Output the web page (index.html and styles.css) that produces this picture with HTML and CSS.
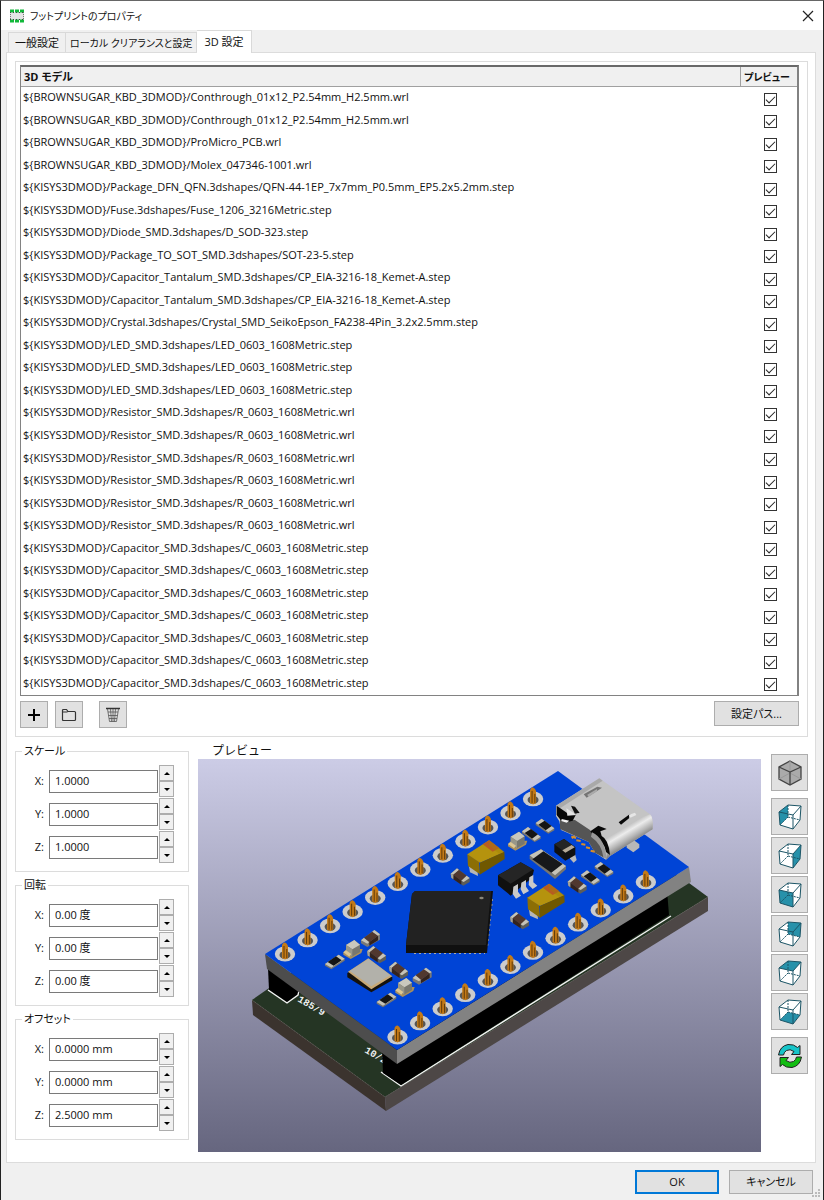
FILE: index.html
```
<!DOCTYPE html>
<html lang="ja">

<head>
    <meta charset="UTF-8">
    <meta name="viewport" content="width=device-width, initial-scale=1.0">
    <title>フットプリントのプロパティ</title>
    <link rel="stylesheet" href="styles.css">
</head>

<body>
    <div class="dialog">
        <header class="titlebar">
            <svg class="app-icon" width="16" height="16" viewBox="0 0 16 16">
                <rect x="1" y="4" width="14" height="8" fill="#e4e4e4" />
                <path d="M1.500 4v8M14.500 4v8" stroke="#777" stroke-dasharray="1 1" />
                <path d="M1 3h4M6 3h4M11 3h4M1 13h4M6 13h4M11 13h4" stroke="#12b83a" stroke-width="3" />
                <path d="M1 4.500h14M1 11.500h14" stroke="#444" stroke-dasharray="1 2" />
            </svg>
            <h1>フットプリントのプロパティ</h1>
            <button class="close" aria-label="閉じる">
                <svg width="12" height="12" viewBox="0 0 12 12">
                    <path d="M1 1l10 10M11 1L1 11" stroke="#222" stroke-width="1.2" />
                </svg>
            </button>
        </header>

        <nav class="tabs">
            <button class="tab">一般設定</button>
            <button class="tab long">ローカル クリアランスと設定</button>
            <button class="tab active">3D 設定</button>
        </nav>

        <main class="page">
            <section class="models">
                <table class="model-table">
                    <thead>
                        <tr>
                            <th>3D モデル</th>
                            <th class="col-preview">プレビュー</th>
                        </tr>
                    </thead>
                    <tbody id="modelRows"></tbody>
                </table>
                <div class="toolbar">
                    <button class="tool" aria-label="追加">
                        <svg width="14" height="14" viewBox="0 0 14 14">
                            <path d="M7 1v12M1 7h12" stroke="#000" stroke-width="2" />
                        </svg>
                    </button>
                    <button class="tool" aria-label="フォルダー">
                        <svg width="16" height="14" viewBox="0 0 16 14">
                            <path d="M1.500 11.500V2.500q0-1 1-1h3l1.500 2h6.500q1 0 1 1v7q0 1-1 1h-11q-1 0-1-1zM1.500 4h5" fill="none" stroke="#333" stroke-width="1.200" />
                        </svg>
                    </button>
                    <button class="tool trash" aria-label="削除">
                        <svg width="14" height="16" viewBox="0 0 14 16">
                            <path d="M0 1.500h14" stroke="#333" stroke-width="1.500" />
                            <path d="M1.500 2l2 12.500h7L12.500 2M4.500 2l1 12.500M7 2v12.500M9.500 2l-1 12.500M2 5h10M2.500 8.500h9M3 11.500h8" fill="none" stroke="#555" stroke-width="0.800" />
                        </svg>
                    </button>
                    <button class="paths">設定パス...</button>
                </div>
            </section>

            <section class="lower">
                <div class="params">
                    <fieldset>
                        <legend>スケール</legend>
                        <div class="param"><label for="scaleX">X:</label><input type="text" id="scaleX" value="1.0000"><span class="spin"><button aria-label="増"></button><button aria-label="減"></button></span></div>
                        <div class="param"><label for="scaleY">Y:</label><input type="text" id="scaleY" value="1.0000"><span class="spin"><button aria-label="増"></button><button aria-label="減"></button></span></div>
                        <div class="param"><label for="scaleZ">Z:</label><input type="text" id="scaleZ" value="1.0000"><span class="spin"><button aria-label="増"></button><button aria-label="減"></button></span></div>
                    </fieldset>
                    <fieldset>
                        <legend>回転</legend>
                        <div class="param"><label for="rotX">X:</label><input type="text" id="rotX" value="0.00 度"><span class="spin"><button aria-label="増"></button><button aria-label="減"></button></span></div>
                        <div class="param"><label for="rotY">Y:</label><input type="text" id="rotY" value="0.00 度"><span class="spin"><button aria-label="増"></button><button aria-label="減"></button></span></div>
                        <div class="param"><label for="rotZ">Z:</label><input type="text" id="rotZ" value="0.00 度"><span class="spin"><button aria-label="増"></button><button aria-label="減"></button></span></div>
                    </fieldset>
                    <fieldset>
                        <legend>オフセット</legend>
                        <div class="param"><label for="offX">X:</label><input type="text" id="offX" value="0.0000 mm"><span class="spin"><button aria-label="増"></button><button aria-label="減"></button></span></div>
                        <div class="param"><label for="offY">Y:</label><input type="text" id="offY" value="0.0000 mm"><span class="spin"><button aria-label="増"></button><button aria-label="減"></button></span></div>
                        <div class="param"><label for="offZ">Z:</label><input type="text" id="offZ" value="2.5000 mm"><span class="spin"><button aria-label="増"></button><button aria-label="減"></button></span></div>
                    </fieldset>
                </div>

                <div class="preview">
                    <h2>プレビュー</h2>
                    <svg class="canvas" viewBox="198 759 563 393">
                        <defs>
                            <linearGradient id="shell" gradientUnits="userSpaceOnUse" x1="490" y1="205" x2="520" y2="255">
                                <stop offset="0" stop-color="#c4c4c4" />
                                <stop offset="0.250" stop-color="#ececec" />
                                <stop offset="0.600" stop-color="#b5b5b5" />
                                <stop offset="1" stop-color="#6c6c6c" />
                            </linearGradient>
                            <g id="pin">
                                <ellipse rx="10.200" ry="7.400" fill="#ccc" />
                                <ellipse cy="1" rx="5.500" ry="4" fill="#555" />
                                <path d="M-3 4V-9q1-3 3-2.500q2 .5 3 3.500V4l-3 1.500z" fill="#c47a17" />
                                <path d="M-1 4V-8M1.800 4v-9" stroke="#5e3a0b" />
                            </g>
                            <!-- parts are drawn at 3x -->
                            <g id="capA">
                                <path d="M-28-10L-9-26L29 3V15L10 26L-26 2z" fill="#5d5d58" />
                                <path d="M-28-10L-9-26L-3-21L-20-7z" fill="#c5c3b8" />
                                <path d="M-20-7L-3-21L20-4L4 11z" fill="#51382f" />
                                <path d="M-20-7L4 11V23L-20 7z" fill="#33231e" />
                                <path d="M4 11L20-4L29 3L11 15z" fill="#c5c3b8" />
                                <path d="M-28-10L-20-7V7L-26 2z" fill="#a3a19a" />
                            </g>
                            <g id="capB">
                                <path d="M-29 6L11-25L28-12V4L-10 26L-29 15z" fill="#777" />
                                <path d="M-29 6L-20-2L-4 11L-10 16z" fill="#c5c3b8" />
                                <path d="M-20-2L5-20L22-8L-4 11z" fill="#51382f" />
                                <path d="M-4 11L22-8V6L-4 22z" fill="#33231e" />
                                <path d="M5-20L11-25L28-12L22-8z" fill="#c5c3b8" />
                            </g>
                            <g id="resA">
                                <path d="M-28-8L-10-21L28 8V14L10 24L-28-2z" fill="#77756f" />
                                <path d="M-28-8L-10-21L28 8L10 20z" fill="#c5c3b8" />
                                <path d="M-20-3L-1-15L20 1L2 14z" fill="#151515" />
                            </g>
                            <g id="resB">
                                <path d="M-30 8L11-20L29-8V-2L-11 24L-30 13z" fill="#77756f" />
                                <path d="M-30 8L11-20L29-8L-11 19z" fill="#c5c3b8" />
                                <path d="M-22 2L3-15L20-3L-4 13z" fill="#151515" />
                            </g>
                            <g id="led">
                                <path d="M-30 15L-20 5L28 5L24 17L-8 35L-30 22z" fill="#a98f5d" />
                                <path d="M-22-7L3-22L20-8V14L-4 28L-22 15z" fill="#77776f" />
                                <path d="M-22-7L3-22L20-8L-3 6z" fill="#c9c8bd" />
                                <path d="M-22-7L-3 6V28L-22 15z" fill="#989789" />
                                <path d="M-30 15L-22 9L-6 20L-12 28z" fill="#dcc692" />
                            </g>
                            <g id="tant">
                                <path d="M3 28L8 57L32 68L30 45z" fill="#b7b7b7" />
                                <path d="M0 2L35 25L38 63L2 38z" fill="#8c6e05" />
                                <path d="M0 3L65-39L111-3L38 28z" fill="#b5930e" />
                                <path d="M38 28L111-5L112 17L37 64z" fill="#705800" />
                                <path d="M46-27L66-39L96-16L76-5z" fill="#b75c22" />
                                <path d="M66-39L111-5L96 1L64-23z" fill="#a17f08" opacity="0.400" />
                            </g>
                        </defs>

                        <!-- lower board -->
                        <path d="M252 1000L555 790L689 883L708 897L385 1097z" fill="#253524" />
                        <path d="M252 1000L385 1097L386 1111L253 1015z" fill="#3b332e" />
                        <path d="M385 1097L708 897V911L386 1111z" fill="#4d4746" />
                        <path d="M252 1000L385 1097L708 897" fill="none" stroke="#5f5e52" stroke-dasharray="1 1" />
                        <g class="silk">
                            <text transform="translate(297 1001) rotate(30)">185/9</text>
                            <text transform="translate(364 1052) rotate(30)">10/2</text>
                        </g>

                        <!-- sockets -->
                        <path d="M268 968L269 990L287 1002L301 993V985z" />
                        <path d="M268 990L287 1003L298 995L300 987M381 1072L401 1086L671 916" fill="none" stroke="#f3f3f3" stroke-width="1.400" />
                        <path d="M382 1050L383 1073L401 1085L669 915L667 890z" />

                        <!-- upper board -->
                        <path d="M265 954L397 1050V1064L267 969z" fill="#4d4d4d" />
                        <path d="M397 1050L689 867L691 882L397 1064z" fill="#828282" />
                        <path d="M265 954L558 771L689 867L397 1050z" fill="#0044d6" />

                        <g transform="translate(460 760) scale(.33333)">
                            <use href="#capA" x="0" y="351" />
                            <use href="#led" x="174" y="237" />
                            <use href="#resA" x="214" y="222" />
                            <use href="#resA" x="255" y="197" />
                            <use href="#tant" x="22" y="280" />
                            <!-- fuse -->
                            <path d="M209 286L243 268L318 318V328L285 357L209 297z" fill="#77756f" />
                            <path d="M209 286L243 268L318 318L285 346z" fill="#c5c3b8" />
                            <path d="M217 298L250 274L308 312L274 338z" fill="#17181a" />
                            <!-- diode -->
                            <path d="M330 285L344 278L350 300L341 308L330 296z" fill="#bbb" />
                            <path d="M283 253L312 237L346 262V285L316 302L283 276z" fill="#111" />
                            <path d="M283 253L312 237L346 262L316 278z" fill="#252525" />
                            <path d="M307 271L335 255L344 262L316 278z" fill="#b5aa98" />
                            <!-- regulator -->
                            <path d="M114 346L182 307L222 330L216 353L152 407L114 376z" fill="#101010" />
                            <path d="M114 346L182 307L220 328L152 371z" fill="#252525" />
                            <path d="M160 380L174 372V395L183 407L168 416L158 402zM184 368L198 360V380L207 393L190 403L182 388zM208 352L220 345V367L232 377L218 387L206 375z" fill="#c9c9c9" />
                            <use href="#tant" x="202" y="410" />
                            <use href="#capA" x="351" y="375" />
                            <use href="#resA" x="391" y="352" />
                            <use href="#resA" x="432" y="327" />
                            <use href="#capA" x="178" y="482" />
                            <!-- usb connector -->
                            <path d="M500 252L522 241L538 253V263L520 277L500 263z" fill="#b8b8b8" />
                            <path d="M288 137L418 55L570 163Q580 170 578 208L450 288L438 299L405 278L386 246L303 210L298 184L288 168z" fill="#c4c4c4" />
                            <path d="M288 137L418 55L428 62L300 145z" fill="#a9a9a9" />
                            <path d="M425 222L440 212L570 163Q580 170 578 208L450 288L438 299Q448 240 425 222z" fill="url(#shell)" />
                            <path d="M300 177L345 180L390 210L430 262L432 293L405 278L386 246L300 207z" fill="#555" />
                            <path d="M290 137L330 165L350 160L338 182L320 187L302 180L290 165z" fill="#080808" />
                            <path d="M319 145L350 165L322 167z" fill="#e4e4e4" />
                            <path d="M333 137L345 140L359 159L344 160z" fill="#111" />
                            <path d="M305 177l23 5l-8 6l-16-5z" fill="#f2f2f2" />
                            <path d="M391 214L415 197L440 207L421 214L425 228Q446 238 450 285L438 276Q433 243 407 237z" fill="#080808" />
                            <path d="M396 217Q435 235 440 298L430 292Q426 253 393 230z" fill="#999" />
                            <path d="M371 103L412 80L426 83L380 113z" fill="#747474" />
                            <path d="M382 104L411 87V94L385 111z" fill="#aaa" />
                            <path d="M476 187L507 164H520L483 194z" fill="#090909" />
                            <path d="M507 164L525 158L529 165L508 175z" fill="#e6e6e6" />
                            <path d="M334 229l14 5M335 234l10-5M349 241l13 2M364 252l12 2M378 262l12 3M392 272l12 3" stroke="#d98e26" stroke-width="6" />
                        </g>

                        <!-- controller -->
                        <path d="M414 953H485M492 899L487 948" stroke="#aaa" stroke-width="2" stroke-dasharray="2 3" />
                        <path d="M415 891H493L487 953H406V945L412 894z" fill="#101010" />
                        <path d="M415 891H491L486 945H406L412 894z" fill="#222" />
                        <ellipse cx="481.500" cy="898" rx="2.200" ry="1.300" fill="#8a8577" />

                        <g transform="translate(240 930) scale(.33333)">
                            <use href="#led" x="340" y="52" />
                            <use href="#capB" x="392" y="25" />
                            <use href="#capA" x="409" y="74" />
                            <use href="#resB" x="285" y="94" />
                            <!-- crystal -->
                            <path d="M322 129L385 90L457 142V151L394 187L322 142z" fill="#15120d" />
                            <path d="M324 125L385 85L457 139L394 178z" fill="#c9aa77" />
                            <path d="M329 123L386 87L451 136L394 169z" fill="#b2b1aa" />
                            <use href="#capA" x="475" y="121" />
                            <use href="#led" x="496" y="166" />
                            <use href="#capB" x="547" y="138" />
                            <use href="#resB" x="440" y="208" />
                        </g>
                        <g id="pins"></g>
                    </svg>
                </div>

                <div class="views" id="views">
                    <button class="view ortho" aria-label="正投影">
                        <svg width="24" height="26" viewBox="0 0 24 26">
                            <path d="M12 1L23 7V19L12 25L1 19V7z" fill="#aaa" stroke="#444" stroke-width="1.300" />
                            <path d="M12 1V13L1 19M12 13L23 19" stroke="#999" fill="none" />
                            <path d="M1 7L12 12L23 7M12 12V25" stroke="#444" stroke-width="1.300" fill="none" />
                        </svg>
                    </button>
                    <button class="view reload" aria-label="再読み込み">
                        <svg width="26" height="26" viewBox="0 0 26 26">
                            <path d="M1.500 12Q3 3 11 1.500Q17 1 20.500 4.500L23 2.500V11.500H14.500L17 8.500Q13 5.500 9.500 7.500Q7 9 6.500 12z" fill="#16c4c8" stroke="#222" />
                            <path d="M24.500 14Q23 23 15 24.500Q9 25 5.500 21.500L3 23.500V14.500H11.500L9 17.500Q13 20.500 16.500 18.500Q19 17 19.500 14z" fill="#12bd12" stroke="#222" />
                        </svg>
                    </button>
                </div>
            </section>
        </main>

        <footer class="actions">
            <button class="ok">OK</button>
            <button>キャンセル</button>
            <svg class="grip" width="9" height="9" viewBox="0 0 9 9">
                <path d="M6 0h2v2h-2zM3 3h2v2h-2zM6 3h2v2h-2zM0 6h2v2h-2zM3 6h2v2h-2zM6 6h2v2h-2z" fill="#bbb" />
            </svg>
        </footer>
    </div>
    <script src="script.js"></script>
</body>

</html>
```
FILE: styles.css
```
* {
    box-sizing: border-box;
}

body {
    margin: 0;
    font-family: "Open Sans", "Noto Sans CJK JP", sans-serif;
    font-size: 11px;
    line-height: 16px;
    font-feature-settings: "palt";
    color: #111;
    background: #f0f0f0;
}

button,
input {
    font: inherit;
    font-feature-settings: inherit;
    color: inherit;
    margin: 0;
}

button {
    display: flex;
    align-items: center;
    justify-content: center;
    padding: 0;
    background: #e1e1e1;
    border: 1px solid #adadad;
}

svg {
    display: block;
}

.dialog {
    display: flex;
    flex-direction: column;
    min-height: 100vh;
    border: 1px solid #222;
    border-top-color: #666;
}

.titlebar {
    display: flex;
    align-items: center;
    gap: 5px;
    height: 29px;
    padding: 0 9px 0 8px;
    background: #fff;
}

.titlebar h1 {
    flex: 1;
    margin: 0;
    font-size: 10px;
    font-weight: normal;
}

.close {
    background: none;
    border: 0;
}

.tabs {
    display: flex;
    align-items: flex-end;
    height: 22px;
    padding-left: 7px;
}

.tab {
    height: 20px;
    padding: 0 6px;
    background: #f0f0f0;
    border: 1px solid #d9d9d9;
    border-bottom: 0;
    white-space: nowrap;
}

.tab + .tab {
    border-left: 0;
}

.tab.long {
    padding: 0 4px;
    font-size: 10px;
}

.tab.active {
    height: 23px;
    padding: 0 7px;
    margin-bottom: -1px;
    background: #fff;
    z-index: 1;
}

.page {
    flex: 1;
    margin: 0 7px 0 5px;
    padding: 8px 7px 10px 8px;
    background: #fff;
    border: 1px solid #dcdcdc;
}

.models {
    padding: 3px 8px 8px 4px;
    border: 1px solid #dcdcdc;
}

.model-table {
    width: 100%;
    height: 631px;
    border: 1px solid #828282;
    border-top: 2px solid #696969;
    border-right-width: 2px;
    border-spacing: 0;
}

.model-table th {
    height: 20px;
    padding: 0 3px;
    line-height: 18px;
    text-align: left;
    white-space: nowrap;
    background: #f0f0f0;
    border-bottom: 1px solid #a0a0a0;
}

.model-table .col-preview {
    width: 57px;
    font-size: 10px;
    border-left: 1px solid #a0a0a0;
}

.model-table td {
    padding: 0 2px 2px;
    line-height: 16px;
}

.model-table td.check {
    padding: 2px 0 0 4px;
}

.check input {
    appearance: none;
    display: block;
    width: 13px;
    height: 13px;
    margin: 0 auto;
    border: 1px solid #333;
    background: #fff;
}

.check input:checked::after {
    content: "";
    display: block;
    width: 8px;
    height: 4px;
    margin: 2px 1px;
    border-left: 1px solid #222;
    border-bottom: 1px solid #222;
    transform: rotate(-45deg);
}

.toolbar {
    display: flex;
    gap: 7px;
    margin-top: 5px;
}

.tool {
    width: 28px;
    height: 27px;
}

.trash {
    margin-left: 9px;
}

.paths {
    width: 85px;
    height: 25px;
    margin-left: auto;
}

.lower {
    display: flex;
    margin-top: 6px;
}

.params {
    display: flex;
    flex-direction: column;
    gap: 5px;
    width: 174px;
}

fieldset {
    display: flex;
    flex-direction: column;
    gap: 1px;
    min-width: 0;
    margin: 0;
    padding: 6px 14px 8px 10px;
    border: 1px solid #dcdcdc;
}

legend {
    margin-left: -4px;
    padding: 0 2px;
    line-height: 16px;
}

.param {
    display: flex;
    align-items: center;
    height: 32px;
}

.param label {
    width: 18px;
    margin-right: 5px;
    text-align: right;
}

.param input {
    flex: 1;
    min-width: 0;
    height: 23px;
    padding: 0 5px 2px;
    background: #fff;
    border: 1px solid #7a7a7a;
}

.spin {
    display: flex;
    flex-direction: column;
    width: 15px;
    margin-left: 1px;
}

.spin button {
    height: 16px;
    background: #f0f0f0;
}

.spin button::before {
    content: "";
    border: 3px solid transparent;
    border-top-width: 0;
    border-bottom-color: #000;
}

.spin button:last-child::before {
    border-top: 3px solid #000;
    border-bottom: 0;
}

.preview {
    flex: 1;
    margin: 0 10px 0 9px;
}

.preview h2 {
    margin: 0 0 0 14px;
    font-size: 12px;
    font-weight: normal;
    font-feature-settings: normal;
    line-height: 16px;
}

.canvas {
    width: 100%;
    height: auto;
    background: linear-gradient(#cccce6, #66667f);
}

.silk {
    font-family: "Liberation Mono", monospace;
    font-size: 10px;
    font-weight: bold;
    fill: #f0f0f0;
}

.views {
    display: flex;
    flex-direction: column;
    gap: 2px;
    padding-top: 11px;
}

.view {
    width: 37px;
    height: 37px;
}

.ortho {
    margin-bottom: 5px;
}

.reload {
    margin-top: 5px;
}

.face {
    fill: #2791aa;
}

.edge {
    fill: none;
    stroke: #1c5566;
}

.hidden {
    fill: none;
    stroke: #1c5566;
    stroke-dasharray: 2 1;
}

.actions {
    position: relative;
    display: flex;
    justify-content: flex-end;
    gap: 10px;
    padding: 7px 10px 6px;
}

.actions button {
    width: 84px;
    height: 24px;
}

.actions .ok {
    border: 2px solid #0078d7;
}

.grip {
    position: absolute;
    right: 2px;
    bottom: 2px;
}
```
FILE: script.js
```
var models = [
    '${BROWNSUGAR_KBD_3DMOD}/Conthrough_01x12_P2.54mm_H2.5mm.wrl',
    '${BROWNSUGAR_KBD_3DMOD}/Conthrough_01x12_P2.54mm_H2.5mm.wrl',
    '${BROWNSUGAR_KBD_3DMOD}/ProMicro_PCB.wrl',
    '${BROWNSUGAR_KBD_3DMOD}/Molex_047346-1001.wrl',
    '${KISYS3DMOD}/Package_DFN_QFN.3dshapes/QFN-44-1EP_7x7mm_P0.5mm_EP5.2x5.2mm.step',
    '${KISYS3DMOD}/Fuse.3dshapes/Fuse_1206_3216Metric.step',
    '${KISYS3DMOD}/Diode_SMD.3dshapes/D_SOD-323.step',
    '${KISYS3DMOD}/Package_TO_SOT_SMD.3dshapes/SOT-23-5.step',
    '${KISYS3DMOD}/Capacitor_Tantalum_SMD.3dshapes/CP_EIA-3216-18_Kemet-A.step',
    '${KISYS3DMOD}/Capacitor_Tantalum_SMD.3dshapes/CP_EIA-3216-18_Kemet-A.step',
    '${KISYS3DMOD}/Crystal.3dshapes/Crystal_SMD_SeikoEpson_FA238-4Pin_3.2x2.5mm.step'
];
var i;

for (i = 0; i < 3; i++) models.push('${KISYS3DMOD}/LED_SMD.3dshapes/LED_0603_1608Metric.step');
for (i = 0; i < 6; i++) models.push('${KISYS3DMOD}/Resistor_SMD.3dshapes/R_0603_1608Metric.wrl');
for (i = 0; i < 7; i++) models.push('${KISYS3DMOD}/Capacitor_SMD.3dshapes/C_0603_1608Metric.step');

document.querySelector('#modelRows').innerHTML = models.map(function (path) {
    return '<tr><td>' + path + '</td><td class="check"><input type="checkbox" checked aria-label="' + path + '"></td></tr>';
}).join('');

// two rows of 12 header pins, far ones first
var pins = '';
for (i = 11; i >= 0; i--) {
    pins += '<use href="#pin" x="' + (285 + i * 22.55) + '" y="' + (954 - i * 14.1) + '"/>';
    pins += '<use href="#pin" x="' + (397.5 + i * 22.58) + '" y="' + (1037 - i * 14.1) + '"/>';
}
document.querySelector('#pins').innerHTML = pins;

var faces = [
    ['左', 'M1 8L10 1V13L2 21z'],
    ['右', 'M15 11L23 2L22 16L15 25z'],
    ['前', 'M1 8L15 11V25L2 21z'],
    ['後', 'M10 1L23 2L22 16L10 13z'],
    ['上', 'M1 8L10 1L23 2L15 11z'],
    ['下', 'M2 21L10 13L22 16L15 25z']
];
document.querySelector('.ortho').insertAdjacentHTML('afterend', faces.map(function (face) {
    return '<button class="view" aria-label="' + face[0] + '"><svg width="24" height="26" viewBox="0 0 24 26">' +
        '<path fill="#fff" d="M1 8L10 1L23 2L22 16L15 25L2 21z"/>' +
        '<path class="face" d="' + face[1] + '"/>' +
        '<path class="hidden" d="M10 1V13L2 21M10 13L22 16"/>' +
        '<path class="edge" d="M1 8L10 1L23 2L22 16L15 25L2 21zL15 11V25M15 11L23 2"/></svg></button>';
}).join(''));
```
